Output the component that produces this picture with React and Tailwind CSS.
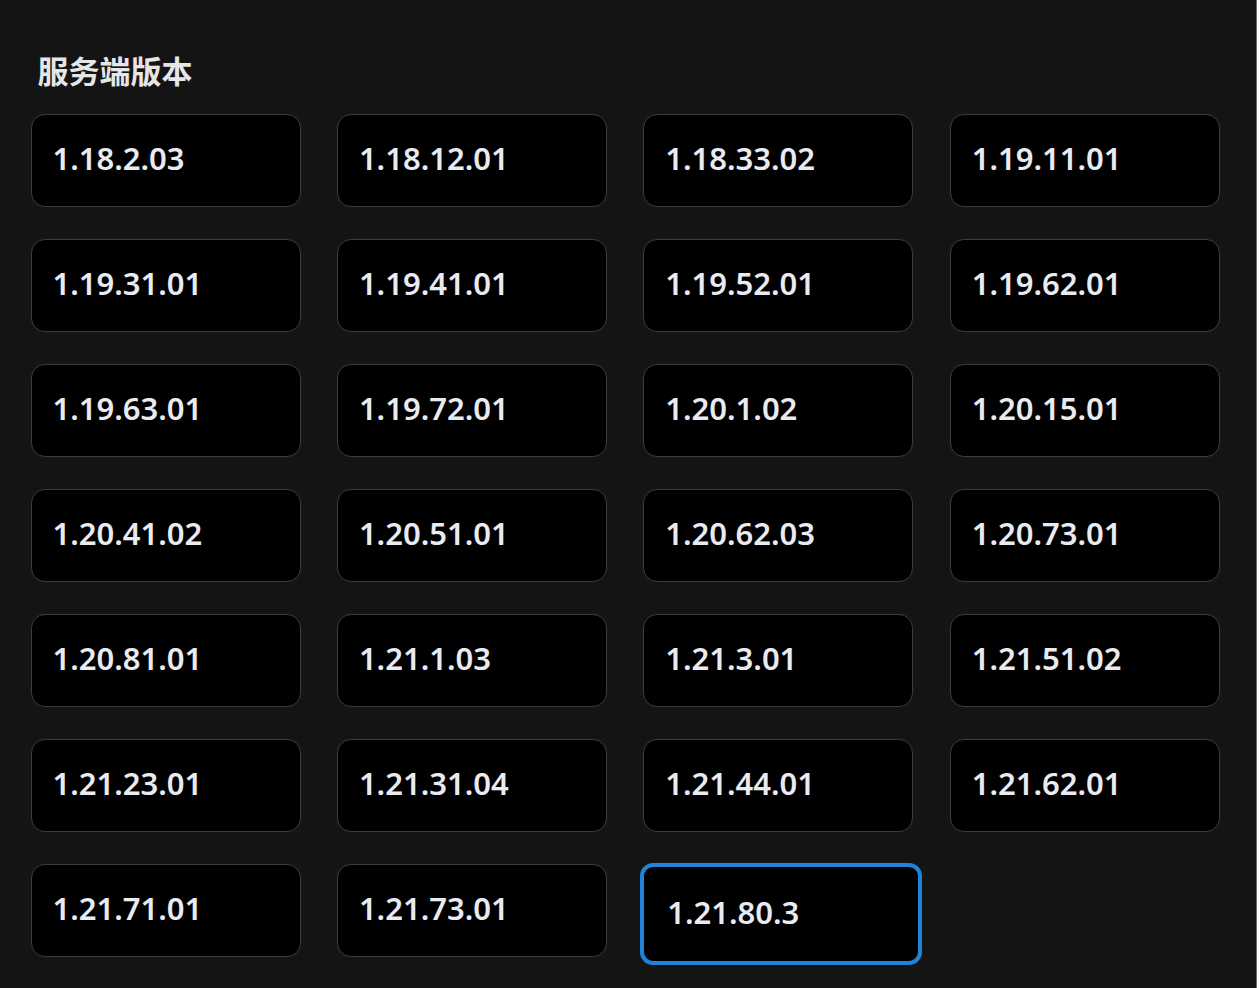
const VERSIONS = [
  '1.18.2.03', '1.18.12.01', '1.18.33.02', '1.19.11.01',
  '1.19.31.01', '1.19.41.01', '1.19.52.01', '1.19.62.01',
  '1.19.63.01', '1.19.72.01', '1.20.1.02', '1.20.15.01',
  '1.20.41.02', '1.20.51.01', '1.20.62.03', '1.20.73.01',
  '1.20.81.01', '1.21.1.03', '1.21.3.01', '1.21.51.02',
  '1.21.23.01', '1.21.31.04', '1.21.44.01', '1.21.62.01',
  '1.21.71.01', '1.21.73.01', '1.21.80.3',
]

const SELECTED = '1.21.80.3'

export default function App() {
  return (
    <div className="min-h-[988px] bg-white">
      <div
        className="w-[1257px] min-h-[988px] bg-[#141414] border-r border-[#6a6a6a] pl-[30.5px] pt-[55.5px]"
        style={{ fontFamily: "'Noto Sans', 'Noto Sans CJK SC', sans-serif" }}
      >
        <h2 className="text-[31px] leading-[31px] h-[31px] font-bold text-[#e6e6e6] pl-[7px] mb-[27px]">
          服务端版本
        </h2>
        <div className="grid grid-cols-[repeat(4,270px)] gap-x-[36.4px] gap-y-[32px] items-start">
          {VERSIONS.map((v) => {
            const sel = v === SELECTED
            return sel ? (
              <div
                key={v}
                className="w-[282px] h-[102px] -ml-[3px] -mt-[1px] rounded-[13px] bg-black border-[4px] border-[#2083da] flex items-center pl-[23px] pb-[2px]"
              >
                <span className="text-[31px] font-semibold text-[#e9ebf1] leading-none">{v}</span>
              </div>
            ) : (
              <div
                key={v}
                className="h-[93px] rounded-[14px] bg-black border border-[#3c3c3c] shadow-[0_0_6px_rgba(255,255,255,0.03)] flex items-center pl-[21px] pb-[4px]"
              >
                <span className="text-[31px] font-semibold text-[#e9ebf1] leading-none">{v}</span>
              </div>
            )
          })}
        </div>
      </div>
    </div>
  )
}
